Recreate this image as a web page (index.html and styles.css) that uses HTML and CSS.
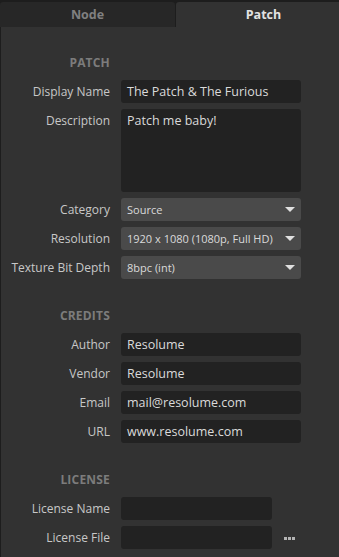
FILE: index.html
```html
<!DOCTYPE html>
<html lang="en">
<head>
    <meta charset="UTF-8">
    <meta name="viewport" content="width=device-width, initial-scale=1.0">
    <title>Patch Properties</title>
    <link rel="stylesheet" href="styles.css">
</head>
<body>
    <div class="tabs">
        <div class="tab">Node</div>
        <div class="tab active">Patch</div>
    </div>
    <div class="panel">
        <div class="section">
            <div class="heading">PATCH</div>
            <div class="spacer"></div>

            <label class="label">Display Name</label>
            <div class="field">The Patch &amp; The Furious</div>

            <label class="label">Description</label>
            <div class="field area">Patch me baby!</div>

            <label class="label">Category</label>
            <div class="dropdown">Source</div>

            <label class="label">Resolution</label>
            <div class="dropdown">1920 x 1080 (1080p, Full HD)</div>

            <label class="label">Texture Bit Depth</label>
            <div class="dropdown">8bpc (int)</div>
        </div>

        <div class="section">
            <div class="heading">CREDITS</div>
            <div class="spacer"></div>

            <label class="label">Author</label>
            <div class="field">Resolume</div>

            <label class="label">Vendor</label>
            <div class="field">Resolume</div>

            <label class="label">Email</label>
            <div class="field">mail@resolume.com</div>

            <label class="label">URL</label>
            <div class="field">www.resolume.com</div>
        </div>

        <div class="section">
            <div class="heading">LICENSE</div>
            <div class="spacer"></div>

            <label class="label">License Name</label>
            <div class="file-row">
                <div class="field short"></div>
            </div>

            <label class="label">License File</label>
            <div class="file-row">
                <div class="field short"></div>
                <svg class="browse" width="12" height="4" viewBox="0 0 12 4">
                    <rect x="0" y="0" width="3" height="3" fill="#b4b4b4"/>
                    <rect x="4" y="0" width="3" height="3" fill="#b4b4b4"/>
                    <rect x="8" y="0" width="3" height="3" fill="#b4b4b4"/>
                </svg>
            </div>
        </div>
    </div>
</body>
</html>
```

FILE: styles.css
```css
body {
    margin: 0;
    font-family: "Open Sans", "Noto Sans", sans-serif;
    font-size: 12px;
    background-color: #1d1d1d;
    color: #c8c8c8;
    height: 557px;
    overflow: hidden;
    display: flex;
    flex-direction: column;
}

.tabs {
    display: flex;
    gap: 1px;
    padding-top: 2px;
    height: 26px;
}

.tab {
    flex: 0 0 175px;
    background-color: #272727;
    border-radius: 3px 3px 0 0;
    color: #808080;
    font-weight: bold;
    font-size: 12.5px;
    text-align: center;
    line-height: 25px;
}

.tab.active {
    background-color: #323232;
    color: #e2e2e2;
}

.panel {
    flex: 1;
    background-color: #323232;
    border-left: 1px solid #1d1d1d;
    padding-top: 24px;
}

.section {
    display: grid;
    grid-template-columns: 109px 180px;
    column-gap: 11px;
    row-gap: 6px;
    margin-bottom: 25px;
}

.heading {
    text-align: right;
    font-weight: bold;
    font-size: 12px;
    color: #7c7c7c;
    line-height: 23px;
    letter-spacing: 0.2px;
}

.label {
    text-align: right;
    line-height: 23px;
    white-space: nowrap;
}

.field {
    height: 23px;
    line-height: 23px;
    background-color: #222222;
    border-radius: 3px;
    padding: 0 6px;
    color: #dadada;
    font-size: 12.5px;
}

.field.area {
    height: 83px;
    line-height: 20px;
    padding-top: 2px;
    box-sizing: border-box;
}

.field.short {
    width: 139px;
}

.dropdown {
    height: 23px;
    line-height: 23px;
    background-color: #4a4a4a;
    border-radius: 3px;
    padding: 0 6px;
    color: #dadada;
    font-size: 11px;
    position: relative;
}

.dropdown::after {
    content: "";
    position: absolute;
    right: 6px;
    top: 9px;
    border-left: 5px solid transparent;
    border-right: 5px solid transparent;
    border-top: 5px solid #e0e0e0;
}

.file-row {
    display: flex;
    align-items: center;
    gap: 12px;
}

.browse {
    margin-top: 2px;
}
```
